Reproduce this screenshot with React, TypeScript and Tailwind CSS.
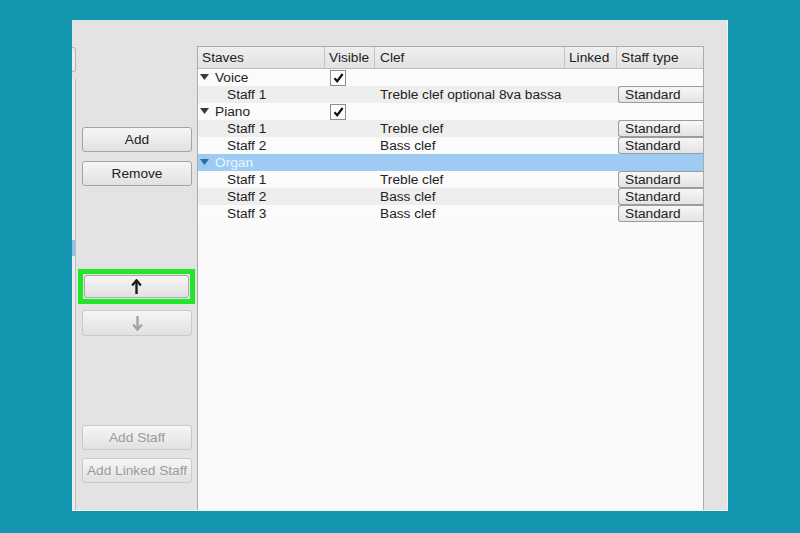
import React from 'react';

type StaffRow = {
  kind: 'part' | 'staff';
  label: string;
  visible?: boolean;
  clef?: string;
  selected?: boolean;
};

const ROWS: StaffRow[] = [
  { kind: 'part', label: 'Voice', visible: true },
  { kind: 'staff', label: 'Staff 1', clef: 'Treble clef optional 8va bassa' },
  { kind: 'part', label: 'Piano', visible: true },
  { kind: 'staff', label: 'Staff 1', clef: 'Treble clef' },
  { kind: 'staff', label: 'Staff 2', clef: 'Bass clef' },
  { kind: 'part', label: 'Organ', selected: true },
  { kind: 'staff', label: 'Staff 1', clef: 'Treble clef' },
  { kind: 'staff', label: 'Staff 2', clef: 'Bass clef' },
  { kind: 'staff', label: 'Staff 3', clef: 'Bass clef' },
];

const COLS = 'grid grid-cols-[127px_50px_190px_52px_1fr]';

const Expander: React.FC<{ selected?: boolean }> = ({ selected }) => (
  <svg width="9" height="6" viewBox="0 0 9 6" className="shrink-0">
    <path d="M0 0 L9 0 L4.5 6 Z" fill={selected ? '#2f6aa6' : '#3a3a3a'} />
  </svg>
);

const CheckBox: React.FC = () => (
  <div className="ml-[5px] w-[16px] h-[16px] bg-white border border-[#8e8e8e] flex items-center justify-center">
    <svg width="11" height="10" viewBox="0 0 11 10">
      <path d="M1.5 5.2 L4.2 8.2 L9.6 1" fill="none" stroke="#111" strokeWidth="2.2" />
    </svg>
  </div>
);

const Arrow: React.FC<{ down?: boolean; color: string }> = ({ down, color }) => (
  <svg width="11" height="16" viewBox="0 0 11 16" className={down ? 'rotate-180' : ''}>
    <path d="M5.5 15 L5.5 2.5" stroke={color} strokeWidth="2.4" />
    <path d="M1.2 6.5 L5.5 1.2 L9.8 6.5" fill="none" stroke={color} strokeWidth="2.2" />
  </svg>
);

const SideButton: React.FC<{
  children: React.ReactNode;
  disabled?: boolean;
  focused?: boolean;
  className?: string;
}> = ({ children, disabled, focused, className = '' }) => (
  <div
    className={`w-[110px] flex items-center justify-center rounded-[3px] border bg-gradient-to-b from-[#f6f6f6] to-[#e1e1e1] text-[13.7px] leading-none ${
      disabled ? 'text-[#9b9b9b] border-[#c9c9c9]' : 'text-[#232323] border-[#a3a3a3]'
    } ${focused ? 'border-[#86a6c6]' : ''} ${className}`}
  >
    {children}
  </div>
);

const StaffTypeButton: React.FC = () => (
  <div className="ml-[1px] h-[17px] flex items-center pl-[6px] rounded-l-[3px] border border-r-0 border-[#9c9c9c] bg-gradient-to-b from-[#f7f7f7] to-[#e3e3e3] text-[#222]">
    Standard
  </div>
);

export default function App() {
  return (
    <div className="w-[800px] h-[533px] bg-[#1496b0] pt-[20px] px-[72px] pb-[22px] font-['Liberation_Sans',Arial,sans-serif]">
      <div className="h-full flex bg-[#e3e3e3] border-r border-b border-[#f2f2f2]">
        {/* clipped edge of the neighbouring list */}
        <div className="w-[5px] flex flex-col">
          <div className="mt-[27px] h-[25px] w-[4px] bg-[#ececec] border-y border-r border-[#b3b3b3] rounded-r-[3px]" />
          <div className="mt-[7px] flex-1 w-[4px] bg-[#ececec] border-r border-[#bdbdbd] flex flex-col">
            <div className="h-[161px]" />
            <div className="h-[16px] w-[3px] bg-[#8fc0ea]" />
          </div>
        </div>

        {/* move / add buttons */}
        <div className="w-[120px] flex flex-col pl-[5px] pt-[107px]">
          <SideButton focused className="h-[25px]">Add</SideButton>
          <SideButton className="mt-[9px] h-[25px]">Remove</SideButton>
          <div className="mt-[83px] -ml-[4px] w-[117px] h-[35px] border-[5px] border-[#22e62a] p-[1px] flex">
            <div className="flex-1 flex items-center justify-center rounded-[3px] border border-[#a8a8a8] bg-gradient-to-b from-[#f6f6f6] to-[#e1e1e1]">
              <Arrow color="#1b1b1b" />
            </div>
          </div>
          <SideButton disabled className="mt-[6px] h-[26px]">
            <Arrow down color="#a3a3a3" />
          </SideButton>
          <SideButton disabled className="mt-[89px] h-[25px]">Add Staff</SideButton>
          <SideButton disabled className="mt-[8px] h-[25px]">Add Linked Staff</SideButton>
        </div>

        {/* staves tree */}
        <div className="w-[507px] mt-[26px] flex flex-col bg-[#fafafa] border-l border-t border-r border-[#ababab] text-[13.7px] leading-none text-[#222]">
          <div className={`${COLS} h-[22px] shrink-0 bg-gradient-to-b from-[#eeeeee] to-[#e2e2e2] border-b border-[#bcbcbc]`}>
            {['Staves', 'Visible', 'Clef', 'Linked', 'Staff type'].map((h, i) => (
              <div
                key={h}
                className={`flex items-center ${i === 2 ? 'pl-[5px]' : 'pl-[4px]'} ${
                  i < 4 ? 'border-r border-[#c4c4c4]' : ''
                }`}
              >
                {h}
              </div>
            ))}
          </div>

          {ROWS.map((r, i) => (
            <div
              key={i}
              className={`${COLS} h-[17px] shrink-0 items-center ${
                r.selected
                  ? 'bg-[#9dcbf3] text-[#eaf5ff]'
                  : i % 2 === 1
                  ? 'bg-[#eeeeee]'
                  : 'bg-[#fbfbfb]'
              }`}
            >
              {r.kind === 'part' ? (
                <div className="flex items-center pl-[2px] gap-[6px]">
                  <Expander selected={r.selected} />
                  <span>{r.label}</span>
                </div>
              ) : (
                <div className="pl-[29px]">{r.label}</div>
              )}
              <div className="flex items-center">{r.visible && <CheckBox />}</div>
              <div className="pl-[5px] whitespace-nowrap">{r.clef ?? ''}</div>
              <div />
              <div>{r.kind === 'staff' && <StaffTypeButton />}</div>
            </div>
          ))}
        </div>

        <div className="flex-1" />
      </div>
    </div>
  );
}
